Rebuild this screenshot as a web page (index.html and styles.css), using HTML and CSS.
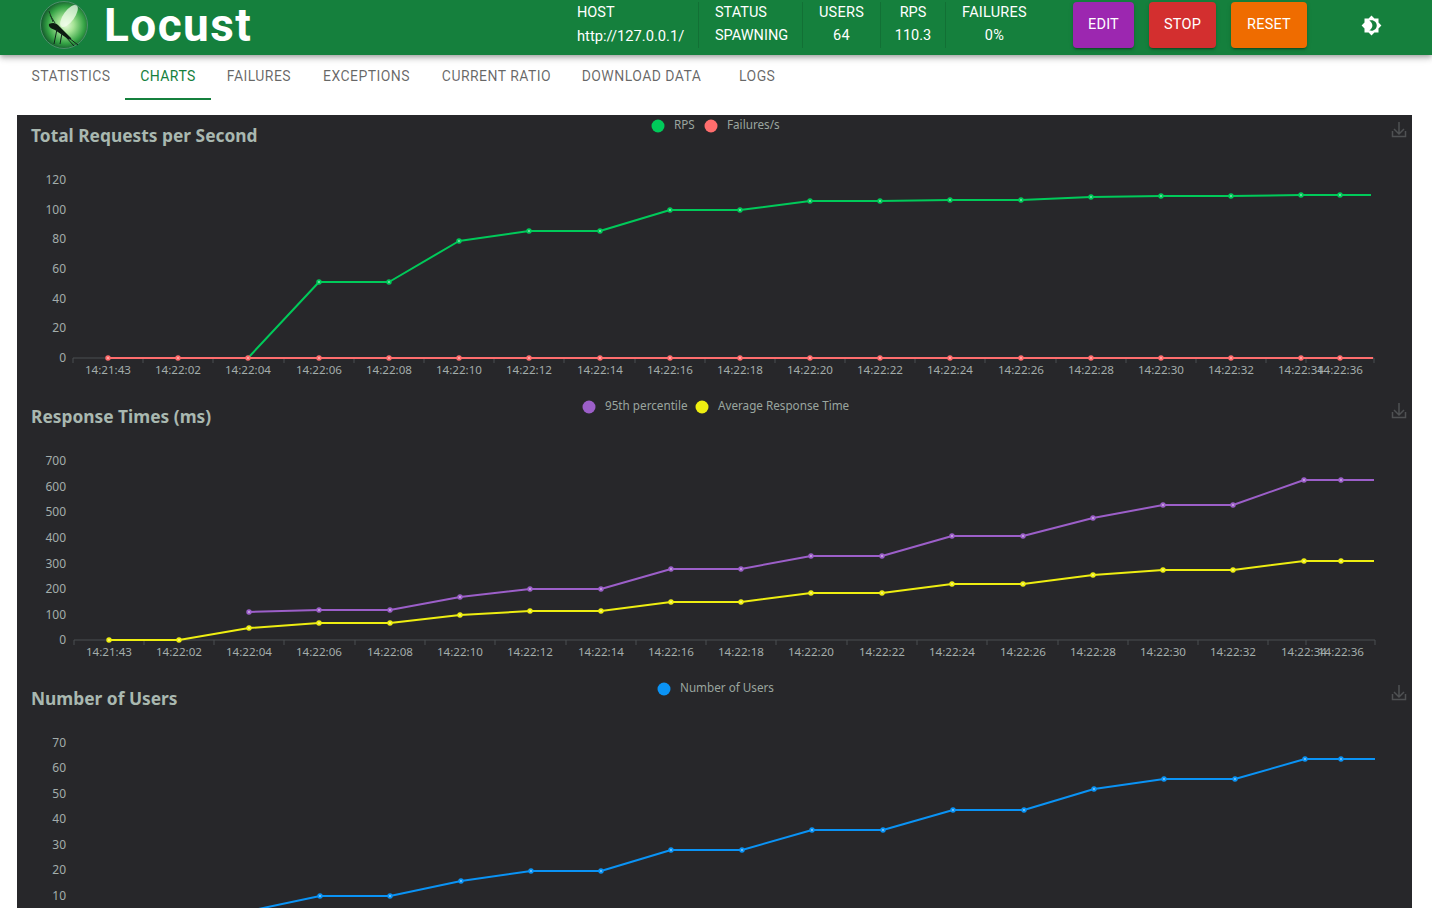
FILE: index.html
```html
<!DOCTYPE html>
<html lang="en">
<head>
<meta charset="utf-8">
<title>Locust</title>
<link rel="stylesheet" href="styles.css">
</head>
<body>
<header class="topbar">
  <a class="brand">
    <svg class="logo" viewBox="0 0 48 48" aria-hidden="true">
      <defs>
        <radialGradient id="orb" cx="54%" cy="50%" r="56%">
          <stop offset="0" stop-color="#e8f9dc"/>
          <stop offset=".3" stop-color="#a6e496"/>
          <stop offset=".7" stop-color="#35a345"/>
          <stop offset="1" stop-color="#0b4a26"/>
        </radialGradient>
      </defs>
      <circle cx="24" cy="24" r="23.500" fill="url(#orb)" stroke="#4f8f6c" stroke-width="1"/>
      <ellipse cx="29" cy="15" rx="5.500" ry="13" transform="rotate(36 29 15)" fill="#f2fcec" opacity=".75"/>
      <path d="M9 10l4 11M10 14l5 8" stroke="#173c22" stroke-width="1" fill="none"/>
      <path d="M9 23c4-2 7-1 9 1l13 13c1 1-1 2-3 1L15 29c-3-1-7-3-6-6z" fill="#0d1a10"/>
      <path d="M17 28l-3 15M22 32l-2 11M29 37l9 7M26 36l8 9" stroke="#10241a" stroke-width="1" fill="none"/>
    </svg>
    <span class="wordmark">Locust</span>
  </a>
  <div class="stats">
    <div class="stat stat-left stat-host"><span>HOST</span><span class="host-url">http://127.0.0.1/</span></div>
    <div class="stat stat-left stat-status"><span>STATUS</span><span>SPAWNING</span></div>
    <div class="stat stat-users"><span>USERS</span><span>64</span></div>
    <div class="stat stat-rps"><span>RPS</span><span>110.3</span></div>
    <div class="stat stat-fail"><span>FAILURES</span><span>0%</span></div>
  </div>
  <div class="actions">
    <button class="btn btn-edit">EDIT</button>
    <button class="btn btn-stop">STOP</button>
    <button class="btn btn-reset">RESET</button>
  </div>
  <svg class="theme" viewBox="0 0 24 24" aria-hidden="true"><path fill="#fff" d="M20 8.690V4h-4.690L12 .690 8.690 4H4v4.690L.690 12 4 15.310V20h4.690L12 23.310 15.310 20H20v-4.690L23.310 12 20 8.690zM12 18c-.890 0-1.740-.200-2.500-.550C11.560 16.500 13 14.420 13 12s-1.440-4.500-3.500-5.450C10.260 6.200 11.110 6 12 6c3.310 0 6 2.690 6 6s-2.690 6-6 6z"/></svg>
</header>

<nav class="tabs">
  <a class="tab">STATISTICS</a>
  <a class="tab tab-active">CHARTS</a>
  <a class="tab">FAILURES</a>
  <a class="tab">EXCEPTIONS</a>
  <a class="tab">CURRENT RATIO</a>
  <a class="tab">DOWNLOAD DATA</a>
  <a class="tab tab-logs">LOGS</a>
</nav>

<main class="charts">
  <svg class="chart" viewBox="17 115 1395 282">
    <text class="title" x="31" y="141.500">Total Requests per Second</text>
    <circle cx="658" cy="126" r="6.500" fill="#00ca5a"/><text class="legend" x="674" y="129">RPS</text>
    <circle cx="711" cy="126" r="6.500" fill="#ff6d6d"/><text class="legend" x="727" y="129">Failures/s</text>
    <path class="dl" d="M1399 122v12M1394 129l5 5 5-5M1392.500 131v5.500h13V131"/>
    <g class="ylab">
      <text x="66" y="183.500">120</text><text x="66" y="213.500">100</text><text x="66" y="242.500">80</text><text x="66" y="272.500">60</text><text x="66" y="302.500">40</text><text x="66" y="331.500">20</text><text x="66" y="361.500">0</text>
    </g>
    <path class="axis" d="M73 358H1374M73 358v5M143 358v5M213 358v5M284 358v5M354 358v5M424 358v5M494 358v5M564 358v5M635 358v5M705 358v5M775 358v5M845 358v5M915 358v5M985 358v5M1056 358v5M1126 358v5M1196 358v5M1266 358v5M1306 358v5M1374 358v5"/>
    <g class="xlab">
      <text x="108" y="374">14:21:43</text><text x="178" y="374">14:22:02</text><text x="248" y="374">14:22:04</text><text x="319" y="374">14:22:06</text><text x="389" y="374">14:22:08</text><text x="459" y="374">14:22:10</text><text x="529" y="374">14:22:12</text><text x="600" y="374">14:22:14</text><text x="670" y="374">14:22:16</text><text x="740" y="374">14:22:18</text><text x="810" y="374">14:22:20</text><text x="880" y="374">14:22:22</text><text x="950" y="374">14:22:24</text><text x="1021" y="374">14:22:26</text><text x="1091" y="374">14:22:28</text><text x="1161" y="374">14:22:30</text><text x="1231" y="374">14:22:32</text><text x="1301" y="374">14:22:34</text><text x="1340" y="374">14:22:36</text>
    </g>
    <polyline class="line green" points="248,358 319,282 389,282 459,241 529,231 600,231 670,210 740,210 810,201 880,201 950,200 1021,200 1091,197 1161,196 1231,196 1301,195 1340,195 1371,195"/>
    <g class="dots green">
      <circle cx="319" cy="282" r="1.700"/><circle cx="389" cy="282" r="1.700"/><circle cx="459" cy="241" r="1.700"/><circle cx="529" cy="231" r="1.700"/><circle cx="600" cy="231" r="1.700"/><circle cx="670" cy="210" r="1.700"/><circle cx="740" cy="210" r="1.700"/><circle cx="810" cy="201" r="1.700"/><circle cx="880" cy="201" r="1.700"/><circle cx="950" cy="200" r="1.700"/><circle cx="1021" cy="200" r="1.700"/><circle cx="1091" cy="197" r="1.700"/><circle cx="1161" cy="196" r="1.700"/><circle cx="1231" cy="196" r="1.700"/><circle cx="1301" cy="195" r="1.700"/><circle cx="1340" cy="195" r="1.700"/>
    </g>
    <polyline class="line red" points="108,358 1373,358"/>
    <g class="dots red">
      <circle cx="108" cy="358" r="1.700"/><circle cx="178" cy="358" r="1.700"/><circle cx="248" cy="358" r="1.700"/><circle cx="319" cy="358" r="1.700"/><circle cx="389" cy="358" r="1.700"/><circle cx="459" cy="358" r="1.700"/><circle cx="529" cy="358" r="1.700"/><circle cx="600" cy="358" r="1.700"/><circle cx="670" cy="358" r="1.700"/><circle cx="740" cy="358" r="1.700"/><circle cx="810" cy="358" r="1.700"/><circle cx="880" cy="358" r="1.700"/><circle cx="950" cy="358" r="1.700"/><circle cx="1021" cy="358" r="1.700"/><circle cx="1091" cy="358" r="1.700"/><circle cx="1161" cy="358" r="1.700"/><circle cx="1231" cy="358" r="1.700"/><circle cx="1301" cy="358" r="1.700"/><circle cx="1340" cy="358" r="1.700"/>
    </g>
  </svg>

  <svg class="chart" viewBox="17 397 1395 282">
    <text class="title" x="31" y="422.500">Response Times (ms)</text>
    <circle cx="589" cy="407" r="6.500" fill="#9c5fc9"/><text class="legend" x="605" y="410">95th percentile</text>
    <circle cx="702" cy="407" r="6.500" fill="#eeee11"/><text class="legend" x="718" y="410">Average Response Time</text>
    <path class="dl" d="M1399 403v12M1394 410l5 5 5-5M1392.500 412v5.500h13V412"/>
    <g class="ylab">
      <text x="66" y="464.500">700</text><text x="66" y="490.500">600</text><text x="66" y="515.500">500</text><text x="66" y="541.500">400</text><text x="66" y="567.500">300</text><text x="66" y="592.500">200</text><text x="66" y="618.500">100</text><text x="66" y="643.500">0</text>
    </g>
    <path class="axis" d="M74 640H1375M74 640v5M144 640v5M214 640v5M284 640v5M355 640v5M425 640v5M495 640v5M566 640v5M636 640v5M706 640v5M776 640v5M847 640v5M917 640v5M987 640v5M1058 640v5M1128 640v5M1198 640v5M1268 640v5M1306 640v5M1375 640v5"/>
    <g class="xlab">
      <text x="109" y="656">14:21:43</text><text x="179" y="656">14:22:02</text><text x="249" y="656">14:22:04</text><text x="319" y="656">14:22:06</text><text x="390" y="656">14:22:08</text><text x="460" y="656">14:22:10</text><text x="530" y="656">14:22:12</text><text x="601" y="656">14:22:14</text><text x="671" y="656">14:22:16</text><text x="741" y="656">14:22:18</text><text x="811" y="656">14:22:20</text><text x="882" y="656">14:22:22</text><text x="952" y="656">14:22:24</text><text x="1023" y="656">14:22:26</text><text x="1093" y="656">14:22:28</text><text x="1163" y="656">14:22:30</text><text x="1233" y="656">14:22:32</text><text x="1304" y="656">14:22:34</text><text x="1341" y="656">14:22:36</text>
    </g>
    <polyline class="line purple" points="249,612 319,610 390,610 460,597 530,589 601,589 671,569 741,569 811,556 882,556 952,536 1023,536 1093,518 1163,505 1233,505 1304,480 1341,480 1374,480"/>
    <g class="dots purple">
      <circle cx="249" cy="612" r="1.700"/><circle cx="319" cy="610" r="1.700"/><circle cx="390" cy="610" r="1.700"/><circle cx="460" cy="597" r="1.700"/><circle cx="530" cy="589" r="1.700"/><circle cx="601" cy="589" r="1.700"/><circle cx="671" cy="569" r="1.700"/><circle cx="741" cy="569" r="1.700"/><circle cx="811" cy="556" r="1.700"/><circle cx="882" cy="556" r="1.700"/><circle cx="952" cy="536" r="1.700"/><circle cx="1023" cy="536" r="1.700"/><circle cx="1093" cy="518" r="1.700"/><circle cx="1163" cy="505" r="1.700"/><circle cx="1233" cy="505" r="1.700"/><circle cx="1304" cy="480" r="1.700"/><circle cx="1341" cy="480" r="1.700"/>
    </g>
    <polyline class="line yellow" points="109,640 179,640 249,628 319,623 390,623 460,615 530,611 601,611 671,602 741,602 811,593 882,593 952,584 1023,584 1093,575 1163,570 1233,570 1304,561 1341,561 1374,561"/>
    <g class="dots yellow">
      <circle cx="109" cy="640" r="1.700"/><circle cx="179" cy="640" r="1.700"/><circle cx="249" cy="628" r="1.700"/><circle cx="319" cy="623" r="1.700"/><circle cx="390" cy="623" r="1.700"/><circle cx="460" cy="615" r="1.700"/><circle cx="530" cy="611" r="1.700"/><circle cx="601" cy="611" r="1.700"/><circle cx="671" cy="602" r="1.700"/><circle cx="741" cy="602" r="1.700"/><circle cx="811" cy="593" r="1.700"/><circle cx="882" cy="593" r="1.700"/><circle cx="952" cy="584" r="1.700"/><circle cx="1023" cy="584" r="1.700"/><circle cx="1093" cy="575" r="1.700"/><circle cx="1163" cy="570" r="1.700"/><circle cx="1233" cy="570" r="1.700"/><circle cx="1304" cy="561" r="1.700"/><circle cx="1341" cy="561" r="1.700"/>
    </g>
  </svg>

  <svg class="chart" viewBox="17 679 1395 282">
    <text class="title" x="31" y="704.500">Number of Users</text>
    <circle cx="664" cy="689" r="6.500" fill="#0a93f5"/><text class="legend" x="680" y="692">Number of Users</text>
    <path class="dl" d="M1399 685v12M1394 692l5 5 5-5M1392.500 694v5.500h13V694"/>
    <g class="ylab">
      <text x="66" y="746.500">70</text><text x="66" y="771.500">60</text><text x="66" y="797.500">50</text><text x="66" y="822.500">40</text><text x="66" y="848.500">30</text><text x="66" y="873.500">20</text><text x="66" y="899.500">10</text>
    </g>
    <polyline class="line blue" points="249,911 320,896 390,896 461,881 531,871 601,871 671,850 742,850 812,830 883,830 953,810 1024,810 1094,789 1164,779 1235,779 1305,759 1341,759 1375,759"/>
    <g class="dots blue">
      <circle cx="320" cy="896" r="1.700"/><circle cx="390" cy="896" r="1.700"/><circle cx="461" cy="881" r="1.700"/><circle cx="531" cy="871" r="1.700"/><circle cx="601" cy="871" r="1.700"/><circle cx="671" cy="850" r="1.700"/><circle cx="742" cy="850" r="1.700"/><circle cx="812" cy="830" r="1.700"/><circle cx="883" cy="830" r="1.700"/><circle cx="953" cy="810" r="1.700"/><circle cx="1024" cy="810" r="1.700"/><circle cx="1094" cy="789" r="1.700"/><circle cx="1164" cy="779" r="1.700"/><circle cx="1235" cy="779" r="1.700"/><circle cx="1305" cy="759" r="1.700"/><circle cx="1341" cy="759" r="1.700"/>
    </g>
  </svg>
</main>
</body>
</html>
```
FILE: styles.css
```css
* { box-sizing: border-box; }
html, body { margin: 0; padding: 0; height: 908px; overflow: hidden; background: #fff; }
body { font-family: Roboto, "Liberation Sans", sans-serif; }

.topbar {
  position: relative;
  z-index: 2;
  height: 55px;
  display: flex;
  align-items: flex-start;
  background: #15803d;
  color: #fff;
  box-shadow: 0 2px 4px -1px rgba(0,0,0,.2), 0 4px 5px rgba(0,0,0,.14), 0 1px 10px rgba(0,0,0,.12);
}
.brand { display: flex; align-items: center; height: 50px; margin-left: 40px; width: 521px; flex: none; }
.logo { width: 48px; height: 48px; flex: none; }
.wordmark { margin-left: 16px; font: 700 46px/48px Roboto, sans-serif; letter-spacing: 1.400px; margin-bottom: 1px; }

.stats { display: flex; height: 46px; margin-top: 2px; flex: none; }
.stat {
  display: flex;
  flex-direction: column;
  align-items: center;
  gap: 3px;
  padding: 0 16px;
  padding-top: 1px;
  font-size: 14.500px;
  line-height: 20px;
  border-left: 1px solid rgba(0,0,0,.12);
  white-space: nowrap;
}
.stat:first-child { border-left: 0; }
.stat-left { align-items: flex-start; }
.stat-host { width: 137px; }
.stat-status { width: 104px; }
.stat-users { width: 78px; letter-spacing: .25px; }
.stat-rps { width: 65px; }
.stat-fail { width: 98px; letter-spacing: .25px; }
.host-url { font-size: 14.700px; }

.actions { display: flex; margin-left: 30px; margin-top: 2px; gap: 15px; flex: none; }
.btn {
  height: 46px;
  padding: 0 0 1px;
  border: 0;
  border-radius: 4px;
  color: #fff;
  font: 400 14.500px/24px Roboto, sans-serif;
  letter-spacing: .2px;
  box-shadow: 0 3px 1px -2px rgba(0,0,0,.2), 0 2px 2px rgba(0,0,0,.14), 0 1px 5px rgba(0,0,0,.12);
}
.btn-edit { background: #9c27b0; width: 61px; }
.btn-stop { background: #d32f2f; width: 67px; }
.btn-reset { background: #ef6c00; width: 76px; }
.theme { width: 21px; height: 21px; margin: 15px 0 0 54px; flex: none; }

.tabs { display: grid; grid-template-columns: 108px 86px 96px 119px 141px 149px auto; justify-content: start; height: 45px; padding-left: 17px; }
.tab {
  display: flex;
  align-items: center;
  justify-content: center;
  padding: 0 0 2px;
  height: 45px;
  font-size: 14px;
  font-weight: 400;
  letter-spacing: .45px;
  color: rgba(0,0,0,.6);
  border-bottom: 2px solid transparent;
  white-space: nowrap;
}
.tab-active { color: #15803d; border-bottom-color: #15803d; }
.tab-logs { margin-left: 8px; padding-left: 15px; padding-right: 15px; }

.charts { margin: 15px 20px 0 17px; background: #27272a; display: flex; flex-direction: column; }
.chart { display: block; width: 1395px; height: 282px; flex: none; }

.title { font: 700 17.350px "Noto Sans", sans-serif; fill: #a9b8b0; }
.legend { font: 400 11.700px "Noto Sans", sans-serif; fill: #9aa59f; }
.ylab text { font: 400 12px "Noto Sans", sans-serif; fill: #a3adab; text-anchor: end; }
.xlab text { font: 400 11.600px "Noto Sans", sans-serif; fill: #a3adab; text-anchor: middle; }
.axis { fill: none; stroke: #4b4e50; stroke-width: 1; }
.dl { fill: none; stroke: #4f5153; stroke-width: 1.500; }

.line { fill: none; stroke-width: 2; stroke-linejoin: round; }
.line.green { stroke: #00ca5a; }
.line.red { stroke: #ff6d6d; }
.line.purple { stroke: #9c5fc9; }
.line.yellow { stroke: #eeee11; }
.line.blue { stroke: #0a93f5; }

.dots circle { fill: #fff; stroke-width: 2; }
.dots.green circle { stroke: #00ca5a; }
.dots.red circle { stroke: #ff6d6d; }
.dots.purple circle { stroke: #9c5fc9; }
.dots.yellow circle { stroke: #eeee11; }
.dots.blue circle { stroke: #0a93f5; }
```
